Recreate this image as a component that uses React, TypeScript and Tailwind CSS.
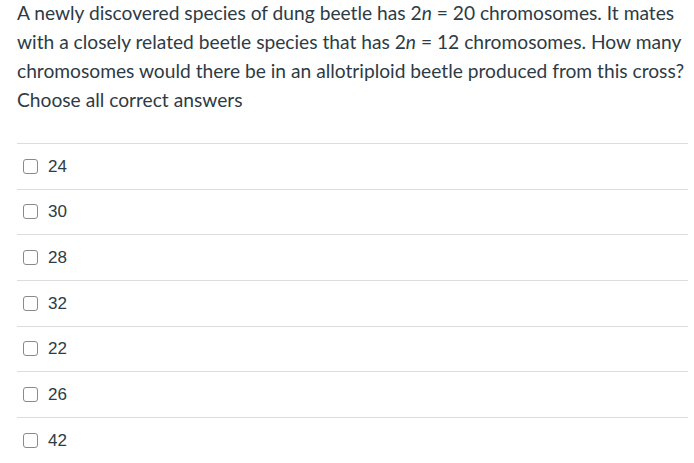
const options = ['24', '30', '28', '32', '22', '26', '42'];

export default function App() {
  return (
    <div className="min-h-screen bg-white pl-[17px] pr-[6px] text-[#2d3b45]">
      <p
        className="mt-[-2px] whitespace-nowrap text-[19.2px] leading-[29px]"
        style={{ fontFamily: 'Lato, sans-serif' }}
      >
        A newly discovered species of dung beetle has 2<i>n</i> = 20 chromosomes. It mates
        <br />
        with a closely related beetle species that has 2<i>n</i> = 12 chromosomes. How many
        <br />
        chromosomes would there be in an allotriploid beetle produced from this cross?
        <br />
        Choose all correct answers
      </p>

      <div className="mt-[29px]">
        {options.map((opt) => (
          <label
            key={opt}
            className="flex h-[45.67px] items-center gap-[10px] border-t border-[#dcdcdc] pl-[6px]"
          >
            <span className="h-[15px] w-[15px] rounded-[3px] border border-[#8a8a8a] bg-white" />
            <span
              className="text-[17px] leading-none text-[#2d3b45]"
              style={{ fontFamily: '"Liberation Sans", Arial, sans-serif' }}
            >
              {opt}
            </span>
          </label>
        ))}
      </div>
    </div>
  );
}
